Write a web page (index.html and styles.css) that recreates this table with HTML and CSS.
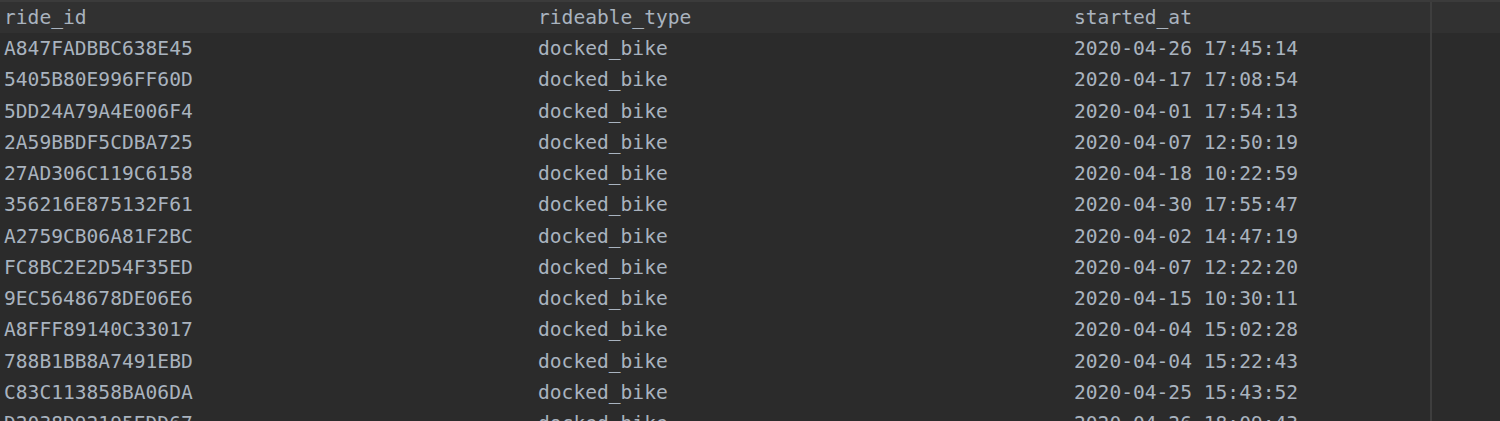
FILE: index.html
```html
<!DOCTYPE html>
<html>
<head>
<meta charset="utf-8">
<link rel="stylesheet" href="styles.css">
</head>
<body>
<div class="grid">
  <div class="table">
    <div class="row head"><div class="c c1">ride_id</div><div class="c c2">rideable_type</div><div class="c c3">started_at</div></div>
    <div class="row"><div class="c c1">A847FADBBC638E45</div><div class="c c2">docked_bike</div><div class="c c3">2020-04-26 17:45:14</div></div>
    <div class="row"><div class="c c1">5405B80E996FF60D</div><div class="c c2">docked_bike</div><div class="c c3">2020-04-17 17:08:54</div></div>
    <div class="row"><div class="c c1">5DD24A79A4E006F4</div><div class="c c2">docked_bike</div><div class="c c3">2020-04-01 17:54:13</div></div>
    <div class="row"><div class="c c1">2A59BBDF5CDBA725</div><div class="c c2">docked_bike</div><div class="c c3">2020-04-07 12:50:19</div></div>
    <div class="row"><div class="c c1">27AD306C119C6158</div><div class="c c2">docked_bike</div><div class="c c3">2020-04-18 10:22:59</div></div>
    <div class="row"><div class="c c1">356216E875132F61</div><div class="c c2">docked_bike</div><div class="c c3">2020-04-30 17:55:47</div></div>
    <div class="row"><div class="c c1">A2759CB06A81F2BC</div><div class="c c2">docked_bike</div><div class="c c3">2020-04-02 14:47:19</div></div>
    <div class="row"><div class="c c1">FC8BC2E2D54F35ED</div><div class="c c2">docked_bike</div><div class="c c3">2020-04-07 12:22:20</div></div>
    <div class="row"><div class="c c1">9EC5648678DE06E6</div><div class="c c2">docked_bike</div><div class="c c3">2020-04-15 10:30:11</div></div>
    <div class="row"><div class="c c1">A8FFF89140C33017</div><div class="c c2">docked_bike</div><div class="c c3">2020-04-04 15:02:28</div></div>
    <div class="row"><div class="c c1">788B1BB8A7491EBD</div><div class="c c2">docked_bike</div><div class="c c3">2020-04-04 15:22:43</div></div>
    <div class="row"><div class="c c1">C83C113858BA06DA</div><div class="c c2">docked_bike</div><div class="c c3">2020-04-25 15:43:52</div></div>
    <div class="row"><div class="c c1">D2038D92195EDD67</div><div class="c c2">docked_bike</div><div class="c c3">2020-04-26 18:09:43</div></div>
  </div>
  <div class="rest">
    <div class="rest-head"></div>
  </div>
</div>
</body>
</html>
```

FILE: styles.css
```css
html, body {
  margin: 0;
  padding: 0;
  background: #2b2b2b;
  overflow: hidden;
}
.grid {
  display: flex;
  height: 421px;
  border-top: 2px solid #3b3b3b;
  box-sizing: border-box;
}
.table {
  width: 1430px;
  border-right: 2px solid #3e3e3e;
  font-family: "DejaVu Sans Mono", "Liberation Mono", monospace;
  font-size: 19.6px;
  color: #a9b3bf;
}
.row {
  display: flex;
  height: 31.25px;
  align-items: center;
  white-space: nowrap;
}
.row.head {
  background: #313131;
  height: 31px;
}
.c {
  box-sizing: border-box;
  padding-left: 4px;
}
.c1 { width: 534px; }
.c2 { width: 536px; }
.c3 { flex: 1; }
.rest {
  flex: 1;
}
.rest-head {
  height: 31px;
  background: #313131;
}
```
